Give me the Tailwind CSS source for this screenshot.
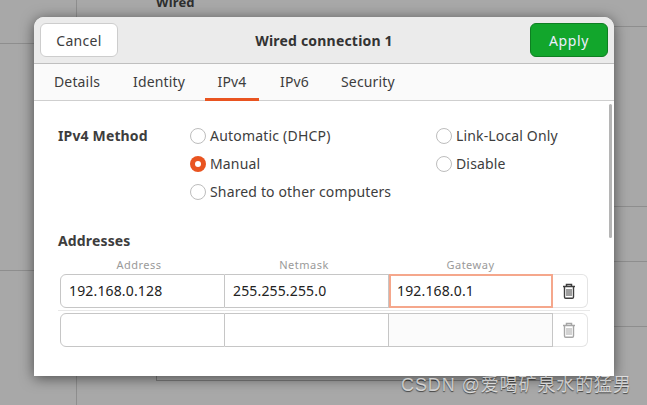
<!DOCTYPE html>
<html lang="en">
<head>
<meta charset="UTF-8">
<title>Wired connection 1</title>
<script src="https://cdn.jsdelivr.net/npm/@tailwindcss/browser@4"></script>
</head>
<body class="relative w-[647px] h-[405px] overflow-hidden bg-[#a8a8a8] font-['Noto_Sans','Liberation_Sans',sans-serif] text-[14px] tracking-[0.15px] text-[#3d3d3d]">

<!-- window behind the dialog -->
<div class="absolute left-[156px] top-[-7px] font-bold text-[13px] text-[#2e2e2e]">Wired</div>
<div class="absolute left-0 top-[43px] w-[34px] h-px bg-[#8e8e8e]"></div>
<div class="absolute left-[76px] top-0 w-px h-[17px] bg-[#8e8e8e]"></div>
<div class="absolute left-[614px] top-[26px] w-[33px] h-px bg-[#8e8e8e]"></div>
<div class="absolute left-[614px] top-[206px] w-[33px] h-px bg-[#8e8e8e]"></div>
<div class="absolute left-[614px] top-[261px] w-[33px] h-px bg-[#8e8e8e]"></div>
<div class="absolute left-[614px] top-[326px] w-[33px] h-px bg-[#8e8e8e]"></div>
<div class="absolute left-0 top-[270px] w-[34px] h-px bg-[#8e8e8e]"></div>
<div class="absolute left-[76px] top-[376px] w-px h-[29px] bg-[#8e8e8e]"></div>
<div class="absolute left-[156px] top-[376px] w-[458px] h-[5px] border-l border-b border-[#7d7d7d]"></div>

<!-- dialog -->
<div class="absolute left-[34px] top-[17px] w-[580px] h-[359px] flex flex-col overflow-hidden rounded-t-[10px] bg-white shadow-[0_2px_14px_rgba(0,0,0,0.55)]">
  <header class="flex items-center justify-between h-[47px] shrink-0 px-[6px] bg-[#ebebeb] border-b border-[#bfbfbf]">
    <button class="w-[78px] h-[34px] rounded-[6px] bg-white border border-[#cdcdcd] tracking-[0.3px]">Cancel</button>
    <div class="font-bold text-[#333] tracking-[0.2px]">Wired connection 1</div>
    <button class="w-[78px] h-[34px] rounded-[6px] bg-[#12a62c] border border-[#0e7f22] text-[#eef] tracking-[0.6px]">Apply</button>
  </header>

  <nav class="flex h-[37px] shrink-0 px-[10px] bg-[#fafafa] border-b border-[#cfcfcf]">
    <div class="px-[10px] pt-[7px] mr-[13px] w-[66px]">Details</div>
    <div class="px-[10px] pt-[7px] mr-[9px] w-[73px]">Identity</div>
    <div class="h-[37px] w-[54px] pt-[7px] text-center border-b-[3px] border-[#e95420] mr-[11px]">IPv4</div>
    <div class="px-[10px] pt-[7px] mr-[13px] w-[48px]">IPv6</div>
    <div class="px-[10px] pt-[7px]">Security</div>
  </nav>

  <main class="relative flex-1 pl-[24px] pr-[26px]">
    <div class="absolute right-[2px] top-[3px] w-[3px] h-[134px] rounded-full bg-[#b5b5b5]"></div>

    <section class="flex pt-[24px]">
      <div class="w-[132px] h-[22px] leading-[22px] font-bold">IPv4 Method</div>
      <div class="w-[246px] flex flex-col gap-[6px]">
        <label class="flex items-center gap-[4px] h-[22px]"><span class="w-[16px] h-[16px] rounded-full border border-[#bdbdbd] bg-white"></span><span class="-mt-[2px] tracking-[0.2px]">Automatic (DHCP)</span></label>
        <label class="flex items-center gap-[4px] h-[22px]"><span class="w-[16px] h-[16px] rounded-full bg-[#e95420] flex items-center justify-center"><span class="w-[6px] h-[6px] rounded-full bg-white"></span></span><span class="-mt-[2px]">Manual</span></label>
        <label class="flex items-center gap-[4px] h-[22px]"><span class="w-[16px] h-[16px] rounded-full border border-[#bdbdbd] bg-white"></span><span class="-mt-[2px]">Shared to other computers</span></label>
      </div>
      <div class="flex flex-col gap-[6px]">
        <label class="flex items-center gap-[4px] h-[22px]"><span class="w-[16px] h-[16px] rounded-full border border-[#bdbdbd] bg-white"></span><span class="-mt-[2px]">Link-Local Only</span></label>
        <label class="flex items-center gap-[4px] h-[22px]"><span class="w-[16px] h-[16px] rounded-full border border-[#bdbdbd] bg-white"></span><span class="-mt-[2px]">Disable</span></label>
      </div>
    </section>

    <section class="mt-[28px]">
      <h2 class="h-[20px] mb-[5px] leading-[20px] font-bold">Addresses</h2>
      <div class="flex h-[18px] items-center ml-[2px] text-[11px] tracking-[0.5px] text-[#9a9a9a]">
        <div class="w-[158px] text-center">Address</div>
        <div class="w-[172px] text-center">Netmask</div>
        <div class="w-[161px] text-center">Gateway</div>
      </div>

      <div class="flex h-[34px] ml-[2px] w-[528px]">
        <div class="w-[165px] pl-[8px] leading-[32px] rounded-l-[6px] border border-[#c6c6c6] text-[#222]">192.168.0.128</div>
        <div class="w-[164px] pl-[8px] leading-[32px] border-y border-r border-[#c6c6c6] text-[#222]">255.255.255.0</div>
        <div class="w-[164px] pl-[6px] leading-[30px] border-2 border-[#f5a78c] text-[#222]">192.168.0.1</div>
        <div class="flex-1 flex items-center justify-center pr-[2px] rounded-r-[6px] border-y border-r border-[#e4e4e4]">
          <svg width="14" height="16" viewBox="0 0 14 16" fill="none" stroke="#3d3d3d"><path d="M1 3.5h12" stroke-width="1.5"/><path d="M4.5 3V1.5h5V3" stroke-width="1.5"/><path d="M2.5 4v10a1.2 1.2 0 0 0 1.2 1.2h6.6a1.2 1.2 0 0 0 1.2-1.2V4" stroke-width="1.4"/><path d="M5 6v7M7 6v7M9 6v7"/></svg>
        </div>
      </div>
      <div class="h-px mt-[2px] w-[532px] bg-[#e8e8e8]"></div>
      <div class="flex h-[34px] mt-[2px] ml-[2px] w-[528px]">
        <div class="w-[165px] rounded-l-[6px] border border-[#c6c6c6]"></div>
        <div class="w-[164px] border-y border-r border-[#c6c6c6]"></div>
        <div class="w-[164px] bg-[#fbfbfb] border-y border-r border-[#c6c6c6]"></div>
        <div class="flex-1 flex items-center justify-center pr-[2px] rounded-r-[6px] border-y border-r border-[#e4e4e4]">
          <svg width="14" height="16" viewBox="0 0 14 16" fill="none" stroke="#a6a6a6"><path d="M1 3.5h12" stroke-width="1.5"/><path d="M4.5 3V1.5h5V3" stroke-width="1.5"/><path d="M2.5 4v10a1.2 1.2 0 0 0 1.2 1.2h6.6a1.2 1.2 0 0 0 1.2-1.2V4" stroke-width="1.4"/><path d="M5 6v7M7 6v7M9 6v7"/></svg>
        </div>
      </div>
    </section>
  </main>
</div>

<!-- watermark -->
<div class="absolute left-[401px] top-[373px] text-[18px] leading-[24px] tracking-[0.9px] text-white/70 font-['Liberation_Sans','Noto_Sans_CJK_SC',sans-serif] [text-shadow:0_1px_1px_rgba(0,0,0,0.6)]">CSDN @爱喝矿泉水的猛男</div>
</body>
</html>
